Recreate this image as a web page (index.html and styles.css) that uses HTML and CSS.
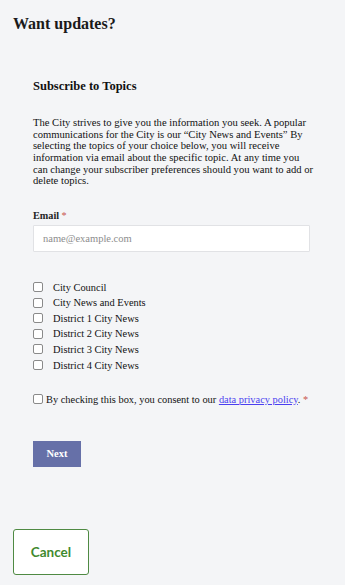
FILE: index.html
```html
<!DOCTYPE html>
<html lang="en">
<head>
<meta charset="utf-8">
<title>Want updates?</title>
<link rel="stylesheet" href="styles.css">
</head>
<body>
<main class="page">
  <h1 class="title">Want updates?</h1>
  <form class="form">
    <h2 class="subtitle">Subscribe to Topics</h2>
    <p class="intro">The City strives to give you the information you seek. A popular communications for the City is our “City News and Events” By selecting the topics of your choice below, you will receive information via email about the specific topic. At any time you can change your subscriber preferences should you want to add or delete topics.</p>
    <label class="field-label" for="email">Email <span class="req">*</span></label>
    <input class="email" id="email" type="email" placeholder="name@example.com">
    <ul class="topics">
      <li class="topic"><span class="box"></span><span>City Council</span></li>
      <li class="topic"><span class="box"></span><span>City News and Events</span></li>
      <li class="topic"><span class="box"></span><span>District 1 City News</span></li>
      <li class="topic"><span class="box"></span><span>District 2 City News</span></li>
      <li class="topic"><span class="box"></span><span>District 3 City News</span></li>
      <li class="topic"><span class="box"></span><span>District 4 City News</span></li>
    </ul>
    <div class="consent"><span class="box"></span><span>By checking this box, you consent to our <a class="link" href="#">data privacy policy</a>. <span class="req">*</span></span></div>
    <button class="next" type="button">Next</button>
  </form>
  <button class="cancel" type="button">Cancel</button>
</main>
</body>
</html>
```
FILE: styles.css
```css
html, body {
  margin: 0;
  padding: 0;
  background: #f4f5f7;
}
.page {
  padding: 14px 0 0 13px;
  font-family: "Liberation Serif", "Times New Roman", serif;
  color: #111;
}
.title {
  margin: 0;
  font-size: 16px;
  line-height: 20px;
  font-weight: 700;
  color: #1a1a1a;
}
.form {
  padding: 0 30px 0 20px;
  display: flex;
  flex-direction: column;
  align-items: flex-start;
}
.subtitle {
  margin: 44.5px 0 0;
  font-size: 12.5px;
  line-height: 15px;
  font-weight: 700;
}
.intro {
  margin: 23.7px 0 0;
  max-width: 281px;
  font-size: 10.6px;
  line-height: 11.6px;
}
.field-label {
  margin-top: 22.7px;
  font-size: 10.2px;
  line-height: 13px;
  font-weight: 700;
  color: #222;
}
.req {
  color: #c9564f;
  font-weight: 400;
}
.email {
  box-sizing: border-box;
  margin-top: 2.8px;
  width: 277px;
  height: 27px;
  border: 1px solid #e1e2e5;
  border-radius: 1px;
  background: #fff;
  padding: 0 0 0 9px;
  font-family: "Liberation Serif", "Times New Roman", serif;
  font-size: 10.5px;
  outline: none;
}
.email::placeholder {
  color: #8d8d8d;
}
.topics {
  list-style: none;
  margin: 27px 0 0;
  padding: 0;
}
.topic {
  display: flex;
  align-items: center;
  gap: 10px;
  height: 15.6px;
  font-size: 10.4px;
}
.box {
  box-sizing: border-box;
  width: 10px;
  height: 10px;
  border: 1px solid #8a8a8a;
  border-radius: 2px;
  background: #fff;
  flex: none;
}
.consent {
  margin-top: 18.7px;
  display: flex;
  align-items: center;
  gap: 3px;
  height: 15.6px;
  font-size: 10.4px;
}
.link {
  color: #4b3ff0;
}
.next {
  margin-top: 33.7px;
  width: 48px;
  height: 26px;
  border: none;
  background: #6670a8;
  color: #fff;
  font-family: "Liberation Serif", "Times New Roman", serif;
  font-weight: 700;
  font-size: 10.5px;
  padding: 0;
}
.cancel {
  margin-top: 62.6px;
  box-sizing: border-box;
  width: 76px;
  height: 46px;
  border: 1.5px solid #4f8a43;
  border-radius: 3px;
  background: #fff;
  color: #3f8a2e;
  font-family: Lato, "Open Sans", sans-serif;
  font-weight: 700;
  font-size: 13.5px;
  padding: 0;
}
```
